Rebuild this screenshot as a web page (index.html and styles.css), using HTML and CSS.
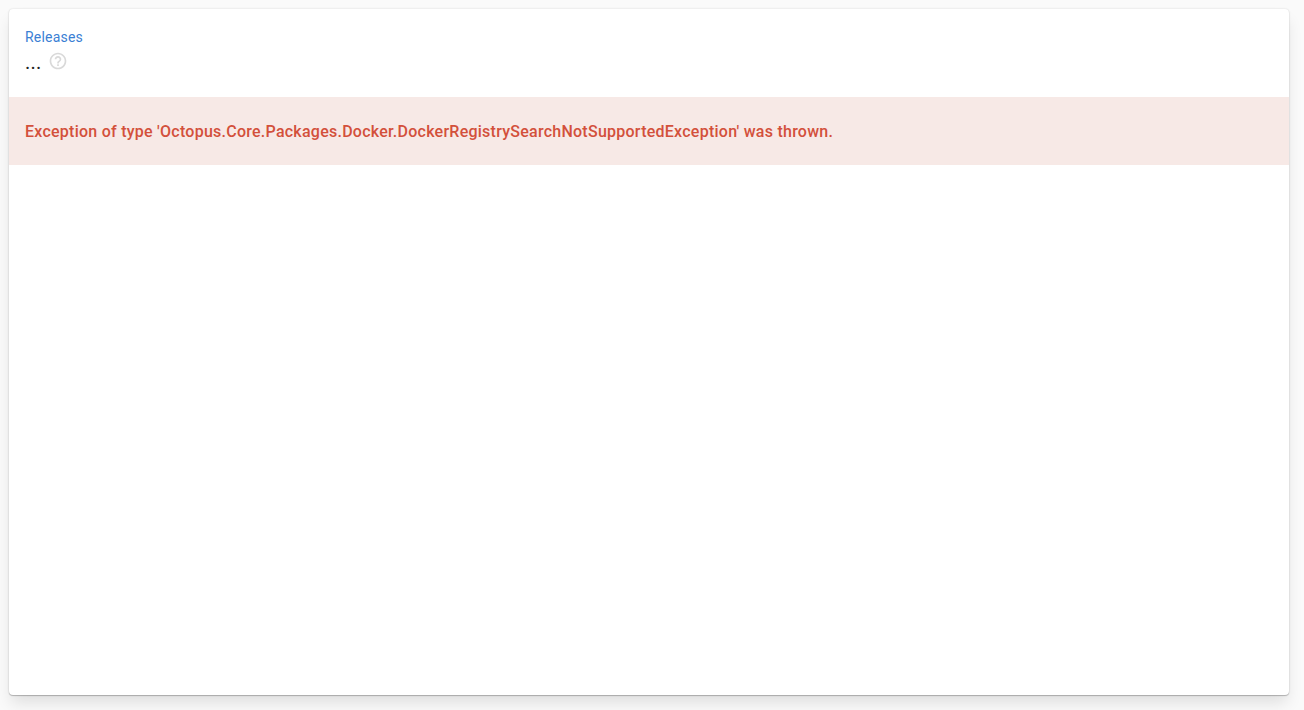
FILE: index.html
```html
<!DOCTYPE html>
<html lang="en">
<head>
<meta charset="utf-8">
<title>Releases</title>
<link rel="stylesheet" href="styles.css">
</head>
<body>
<main class="card">
  <header class="head">
    <a class="crumb" href="#">Releases</a>
    <div class="title-row">
      <span class="title">...</span>
      <svg class="help" width="20" height="20" viewBox="0 0 24 24" aria-hidden="true"><path fill="#d9d9d9" d="M11 18h2v-2h-2v2zm1-16C6.48 2 2 6.48 2 12s4.48 10 10 10 10-4.48 10-10S17.52 2 12 2zm0 18c-4.41 0-8-3.59-8-8s3.59-8 8-8 8 3.59 8 8-3.59 8-8 8zm0-14c-2.21 0-4 1.79-4 4h2c0-1.1.9-2 2-2s2 .9 2 2c0 2-3 1.75-3 5h2c0-2.25 3-2.5 3-5 0-2.21-1.79-4-4-4z"/></svg>
    </div>
  </header>
  <div class="error">Exception of type 'Octopus.Core.Packages.Docker.DockerRegistrySearchNotSupportedException' was thrown.</div>
</main>
</body>
</html>
```
FILE: styles.css
```css
html, body { height: 100%; }
body {
  margin: 0;
  padding: 9px 15px 15px 9px;
  box-sizing: border-box;
  background: #fafafa;
  font-family: Roboto, "Liberation Sans", sans-serif;
  overflow: hidden;
}
.card {
  height: 686px;
  background: #fff;
  border-radius: 4px;
  box-shadow: 0 0 2px rgba(0,0,0,.16), 0 1px 1px rgba(0,0,0,.22), 0 10px 16px -2px rgba(0,0,0,.11);
}
.head {
  height: 88px;
  box-sizing: border-box;
  padding: 20px 16px 0;
}
.crumb {
  display: block;
  font-size: 14px;
  line-height: 16px;
  letter-spacing: .2px;
  color: #3b80d4;
  text-decoration: none;
}
.title-row {
  display: flex;
  align-items: flex-start;
  gap: 7px;
  margin-top: 5px;
}
.title {
  font-size: 20px;
  line-height: 24px;
  letter-spacing: .2px;
  color: #222;
}
.help { margin-top: 1px; }
.error {
  height: 68px;
  box-sizing: border-box;
  padding: 0 16px;
  display: flex;
  align-items: center;
  background: #f7e9e6;
  color: #d3503b;
  font-size: 16px;
  font-weight: 500;
  letter-spacing: .25px;
}
```
